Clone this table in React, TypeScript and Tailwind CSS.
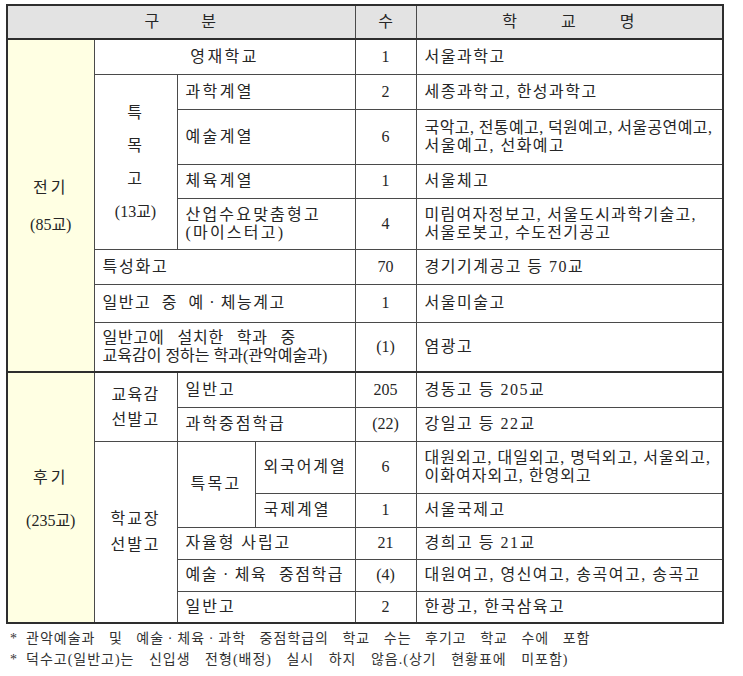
import React from 'react';

// 셀 공통 스타일
const cell = 'border border-[#4a4a4a] px-[8px] py-0 align-middle';
const num = `${cell} text-center tracking-normal`;
const left = `${cell} text-left whitespace-nowrap`;
const school = `${left} tracking-[1.5px]`;
const thick = 'border-t-2 border-t-[#2e2e2e]';

const App: React.FC = () => {
  return (
    <div className="w-[743px] h-[676px] bg-white pt-[4px] pl-[6px] font-['Liberation_Serif','Noto_Sans_CJK_KR',serif] text-[16px] leading-[18px] tracking-[2px] text-[#262626]">
      <table className="table-fixed border-collapse border-2 border-[#2e2e2e] w-[716px]">
        <colgroup>
          <col className="w-[87px]" />
          <col className="w-[83px]" />
          <col className="w-[78px]" />
          <col className="w-[100px]" />
          <col className="w-[61px]" />
          <col className="w-[307px]" />
        </colgroup>
        <thead>
          <tr className="h-[34px] bg-[#e3e3e3]">
            <th colSpan={4} className="border border-[#4a4a4a] border-b-2 border-b-[#2e2e2e] font-normal">
              <div className="flex justify-center gap-[40px]">
                <span>구</span>
                <span>분</span>
              </div>
            </th>
            <th className="border border-[#4a4a4a] border-b-2 border-b-[#2e2e2e] font-normal tracking-normal">수</th>
            <th className="border border-[#4a4a4a] border-b-2 border-b-[#2e2e2e] font-normal">
              <div className="flex justify-center gap-[42px]">
                <span>학</span>
                <span>교</span>
                <span>명</span>
              </div>
            </th>
          </tr>
        </thead>
        <tbody>
          {/* 전기 */}
          <tr className="h-[35px]">
            <td rowSpan={8} className={`${cell} bg-[#ffffe3] text-center`}>
              <div className="leading-[37px]">
                <span className="tracking-[3px]">전기</span>
                <br />
                <span className="tracking-normal">(85교)</span>
              </div>
            </td>
            <td colSpan={3} className={`${cell} text-center tracking-[2.4px]`}>영재학교</td>
            <td className={num}>1</td>
            <td className={school}>서울과학고</td>
          </tr>
          <tr className="h-[35px]">
            <td rowSpan={4} className={`${cell} text-center`}>
              <div className="leading-[33px]">
                특
                <br />
                목
                <br />
                고
                <br />
                <span className="tracking-normal">(13교)</span>
              </div>
            </td>
            <td colSpan={2} className={`${left} tracking-[2.4px]`}>과학계열</td>
            <td className={num}>2</td>
            <td className={school}>세종과학고, 한성과학고</td>
          </tr>
          <tr className="h-[55px]">
            <td colSpan={2} className={`${left} tracking-[2.4px]`}>예술계열</td>
            <td className={num}>6</td>
            <td className={school}>
              <span className="tracking-[0.4px]">국악고, 전통예고, 덕원예고, 서울공연예고,</span>
              <br />
              서울예고, 선화예고
            </td>
          </tr>
          <tr className="h-[34px]">
            <td colSpan={2} className={`${left} tracking-[2.4px]`}>체육계열</td>
            <td className={num}>1</td>
            <td className={school}>서울체고</td>
          </tr>
          <tr className="h-[51px]">
            <td colSpan={2} className={`${left} tracking-[2.2px]`}>
              산업수요맞춤형고
              <br />
              (마이스터고)
            </td>
            <td className={num}>4</td>
            <td className={`${left} tracking-[1.3px]`}>
              미림여자정보고, 서울도시과학기술고,
              <br />
              서울로봇고, 수도전기공고
            </td>
          </tr>
          <tr className="h-[35px]">
            <td colSpan={3} className={`${left} tracking-[1.8px]`}>특성화고</td>
            <td className={num}>70</td>
            <td className={school}>경기기계공고 등 70교</td>
          </tr>
          <tr className="h-[38px]">
            <td colSpan={3} className={`${left} [word-spacing:5px] tracking-[1.5px]`}>일반고 중 예&#8201;·&#8201;체능계고</td>
            <td className={num}>1</td>
            <td className={school}>서울미술고</td>
          </tr>
          <tr className="h-[50px]">
            <td colSpan={3} className={`${left} tracking-normal`}>
              <span className="[word-spacing:8px] tracking-[0.8px]">일반고에 설치한 학과 중</span>
              <br />
              교육감이 정하는 학과(관악예술과)
            </td>
            <td className={num}>(1)</td>
            <td className={school}>염광고</td>
          </tr>

          {/* 후기 */}
          <tr className="h-[35px]">
            <td rowSpan={7} className={`${cell} ${thick} bg-[#ffffe3] text-center`}>
              <div className="leading-[43px] pt-[2px]">
                <span className="tracking-[3px]">후기</span>
                <br />
                <span className="tracking-normal">(235교)</span>
              </div>
            </td>
            <td rowSpan={2} className={`${cell} ${thick} text-center tracking-[1.2px]`}>
              <div className="leading-[25px]">
                교육감
                <br />
                선발고
              </div>
            </td>
            <td colSpan={2} className={`${left} ${thick}`}>일반고</td>
            <td className={`${num} ${thick}`}>205</td>
            <td className={`${school} ${thick}`}>경동고 등 205교</td>
          </tr>
          <tr className="h-[34px]">
            <td colSpan={2} className={left}>과학중점학급</td>
            <td className={num}>(22)</td>
            <td className={school}>강일고 등 22교</td>
          </tr>
          <tr className="h-[52px]">
            <td rowSpan={5} className={`${cell} text-center tracking-[1.9px]`}>
              <div className="leading-[26px]">
                학교장
                <br />
                선발고
              </div>
            </td>
            <td rowSpan={2} className={`${cell} text-center tracking-[2.2px]`}>특목고</td>
            <td className={`${left} tracking-[1.9px]`}>외국어계열</td>
            <td className={num}>6</td>
            <td className={`${left} tracking-[1px]`}>
              대원외고, 대일외고, 명덕외고, 서울외고,
              <br />
              이화여자외고, 한영외고
            </td>
          </tr>
          <tr className="h-[34px]">
            <td className={left}>국제계열</td>
            <td className={num}>1</td>
            <td className={school}>서울국제고</td>
          </tr>
          <tr className="h-[32px]">
            <td colSpan={2} className={`${left} tracking-[1.9px]`}>자율형 사립고</td>
            <td className={num}>21</td>
            <td className={school}>경희고 등 21교</td>
          </tr>
          <tr className="h-[32px]">
            <td colSpan={2} className={`${left} [word-spacing:6px] tracking-[1.6px]`}>예술&#8201;·&#8201;체육 중점학급</td>
            <td className={num}>(4)</td>
            <td className={school}>대원여고, 영신여고, 송곡여고, 송곡고</td>
          </tr>
          <tr className="h-[32px]">
            <td colSpan={2} className={left}>일반고</td>
            <td className={num}>2</td>
            <td className={school}>한광고, 한국삼육고</td>
          </tr>
        </tbody>
      </table>

      {/* 각주 */}
      <div className="mt-[4px] pl-[4px] text-[14px] leading-[21px] tracking-[1px] text-[#333]">
        <p className="flex">
          <span className="mr-[8px]">*</span>
          <span className="[word-spacing:9px]">관악예술과 및 예술&#8201;·&#8201;체육&#8201;·&#8201;과학 중점학급의 학교 수는 후기고 학교 수에 포함</span>
        </p>
        <p className="flex">
          <span className="mr-[8px]">*</span>
          <span className="[word-spacing:10px]">덕수고(일반고)는 신입생 전형(배정) 실시 하지 않음.(상기 현황표에 미포함)</span>
        </p>
      </div>
    </div>
  );
};

export default App;
